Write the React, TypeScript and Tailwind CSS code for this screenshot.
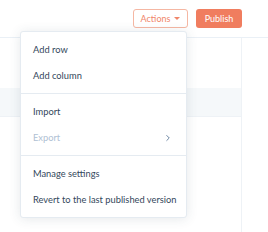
import { ChevronRight } from 'lucide-react'

const groups = [
  [{ label: 'Add row' }, { label: 'Add column' }],
  [{ label: 'Import' }, { label: 'Export', disabled: true, sub: true }],
  [{ label: 'Manage settings' }, { label: 'Revert to the last published version' }],
]

export default function App() {
  return (
    <div className="relative w-[268px] h-[232px] overflow-hidden bg-white font-['Lato',sans-serif]">
      {/* header */}
      <div className="h-[38px] border-b border-[#eaf0f6] flex items-start justify-end gap-2 pr-[26px] pt-[9px]">
        <button className="h-[19px] w-[55px] border border-[#f5b7a3] rounded-[3px] text-[9px] text-[#f0866a] flex items-center justify-center gap-1">
          Actions
          <span className="w-0 h-0 border-l-[3px] border-r-[3px] border-t-[3px] border-l-transparent border-r-transparent border-t-[#f0866a]" />
        </button>
        <button className="h-[19px] w-[46px] rounded-[3px] bg-[#f07d5f] text-[9px] text-white flex items-center justify-center">
          Publish
        </button>
      </div>

      {/* table behind */}
      <div className="w-[242px] h-[200px] border-r border-[#eef2f6] pt-[50px]">
        <div className="h-[29px] bg-[#f5f8fa] border-b border-[#eef2f6]" />
      </div>

      {/* dropdown menu */}
      <div className="absolute left-[20px] top-[31px] w-[167px] bg-white border border-[#e5ebf1] rounded-[3px] shadow-[0_1px_12px_rgba(45,62,80,0.12)]">
        {groups.map((g, i) => (
          <div key={i} className={`pt-[5px] pb-[4px] ${i > 0 ? 'border-t border-[#e5ebf1]' : ''}`}>
            {g.map(item => (
              <div
                key={item.label}
                className={`h-[26px] pl-[12px] pr-[13px] flex items-center justify-between whitespace-nowrap text-[9.3px] ${
                  item.disabled ? 'text-[#b0c1d4]' : 'text-[#33475b]'
                }`}
              >
                <span>{item.label}</span>
                {item.sub && <ChevronRight className="w-[10px] h-[10px] text-[#516f90]" strokeWidth={2} />}
              </div>
            ))}
          </div>
        ))}
      </div>
    </div>
  )
}
